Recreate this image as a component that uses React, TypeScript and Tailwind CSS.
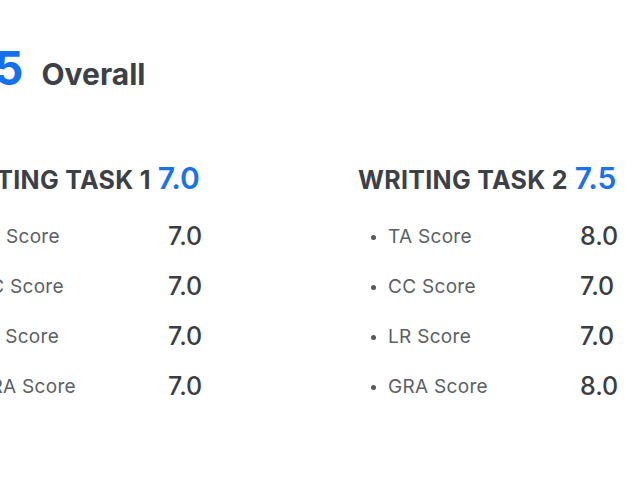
const tasks = [
  {
    title: "WRITING TASK 1",
    band: "7.0",
    scores: [
      { label: "TA Score", value: "7.0" },
      { label: "CC Score", value: "7.0" },
      { label: "LR Score", value: "7.0" },
      { label: "GRA Score", value: "7.0" },
    ],
  },
  {
    title: "WRITING TASK 2",
    band: "7.5",
    scores: [
      { label: "TA Score", value: "8.0" },
      { label: "CC Score", value: "7.0" },
      { label: "LR Score", value: "7.0" },
      { label: "GRA Score", value: "8.0" },
    ],
  },
];

function TaskCard({ task }: { task: (typeof tasks)[number] }) {
  return (
    <div className="flex flex-col">
      <div className="flex items-baseline gap-[7px] h-[40px]">
        <h3 className="text-[25px] font-bold tracking-[0.3px] text-[#3c4047]">
          {task.title}
        </h3>
        <span className="text-[30px] font-semibold text-[#1a73e8]">
          {task.band}
        </span>
      </div>
      <ul className="mt-[16px] pl-[13px]">
        {task.scores.map((s) => (
          <li key={s.label} className="flex items-center h-[50px]">
            <span className="w-[5px] h-[5px] rounded-full bg-[#555a60] mr-[12px]" />
            <span className="w-[192px] text-[19px] tracking-[0.3px] text-[#5b5f66]">
              {s.label}
            </span>
            <span className="text-[25px] font-medium text-[#3a3d42]">
              {s.value}
            </span>
          </li>
        ))}
      </ul>
    </div>
  );
}

export default function App() {
  return (
    <div
      className="w-[640px] h-[480px] overflow-hidden bg-white"
      style={{ fontFamily: "Inter, 'Noto Sans', sans-serif" }}
    >
      <div className="ml-[-54px] pt-[45px]">
        <div className="flex items-baseline gap-[18px] pl-[12px]">
          <span className="text-[46px] font-bold leading-none text-[#1570ef]">
            7.5
          </span>
          <span className="text-[30px] font-bold text-[#3c4047]">
            Overall
          </span>
        </div>
        <div className="grid grid-cols-[412px_1fr] mt-[59px]">
          {tasks.map((t) => (
            <TaskCard key={t.title} task={t} />
          ))}
        </div>
      </div>
    </div>
  );
}
